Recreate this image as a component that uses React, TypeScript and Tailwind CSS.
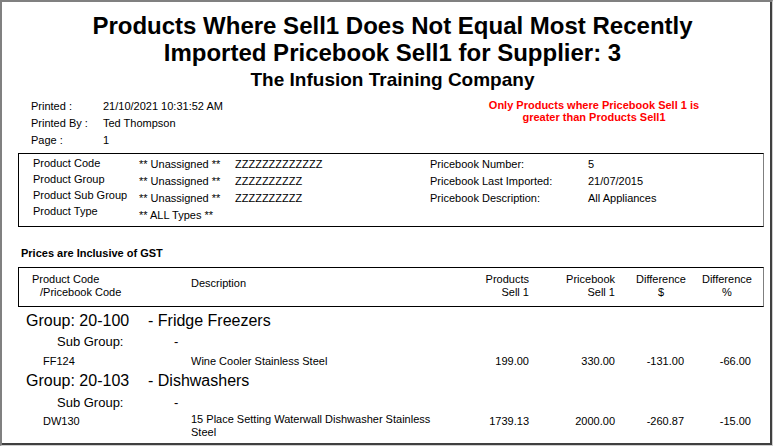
const filterRows = [
  { label: 'Product Code', value: '** Unassigned **', range: 'ZZZZZZZZZZZZZ' },
  { label: 'Product Group', value: '** Unassigned **', range: 'ZZZZZZZZZZ' },
  { label: 'Product Sub Group', value: '** Unassigned **', range: 'ZZZZZZZZZZ' },
  { label: 'Product Type', value: '** ALL Types **', range: '' },
];

const pricebookRows = [
  { label: 'Pricebook Number:', value: '5' },
  { label: 'Pricebook Last Imported:', value: '21/07/2015' },
  { label: 'Pricebook Description:', value: 'All Appliances' },
];

function NumberCells({ sell, book, diff, pct }: { sell: string; book: string; diff: string; pct: string }) {
  return (
    <>
      <div className="w-[88px] text-right">{sell}</div>
      <div className="w-[86px] text-right">{book}</div>
      <div className="w-[69px] text-right">{diff}</div>
      <div className="w-[67px] text-right">{pct}</div>
    </>
  );
}

export default function App() {
  return (
    <div className="w-[773px] h-[446px] bg-white border-t-2 border-l-2 border-[#808080] border-r border-b border-r-[#cfcfcf] border-b-[#cfcfcf] overflow-hidden font-['Liberation_Sans',Arial,sans-serif] text-black">
      <div className="h-full border-r-2 border-b-2 border-[#404040]">
        {/* Title */}
        <div className="pt-[10px] pl-[13px] text-center font-bold">
          <div className="text-[24px] leading-[27px]">Products Where Sell1 Does Not Equal Most Recently</div>
          <div className="text-[24px] leading-[27px]">Imported Pricebook Sell1 for Supplier: 3</div>
          <div className="mt-[2px] text-[19px] leading-[24px]">The Infusion Training Company</div>
        </div>

        {/* Printed info */}
        <div className="mt-[6px] flex text-[11px] leading-[17px]">
          <div className="ml-[29px] w-[72px]">
            <div>Printed :</div>
            <div>Printed By :</div>
            <div>Page :</div>
          </div>
          <div className="w-[361px]">
            <div>21/10/2021 10:31:52 AM</div>
            <div>Ted Thompson</div>
            <div>1</div>
          </div>
          <div className="w-[260px] mt-[1px] text-center font-bold text-[#ff0000] leading-[12px]">
            <div>Only Products where Pricebook Sell 1 is</div>
            <div>greater than Products Sell1</div>
          </div>
        </div>

        {/* Filter box */}
        <div className="mt-[4px] ml-[16px] w-[746px] h-[74px] border border-black border-r-[#7f7f7f] flex text-[11px] pl-[14px]">
          <div className="w-[106px] mt-[1px] leading-[16px]">
            {filterRows.map((r) => (
              <div key={r.label}>{r.label}</div>
            ))}
          </div>
          <div className="w-[96px] mt-[2px] leading-[17px]">
            {filterRows.map((r) => (
              <div key={r.label}>{r.value}</div>
            ))}
          </div>
          <div className="w-[195px] mt-[2px] leading-[17px]">
            {filterRows.map((r) => (
              <div key={r.label} className="h-[17px]">{r.range}</div>
            ))}
          </div>
          <div className="w-[158px] mt-[2px] leading-[17px]">
            {pricebookRows.map((r) => (
              <div key={r.label}>{r.label}</div>
            ))}
          </div>
          <div className="mt-[2px] leading-[17px]">
            {pricebookRows.map((r) => (
              <div key={r.label}>{r.value}</div>
            ))}
          </div>
        </div>

        <div className="mt-[20px] ml-[19px] text-[11px] leading-[13px] font-bold">Prices are Inclusive of GST</div>

        {/* Column header */}
        <div className="mt-[7px] ml-[16px] w-[746px] h-[40px] border border-black border-r-[#7f7f7f] flex text-[11px] leading-[13px] pt-[5px]">
          <div className="w-[172px]">
            <div className="pl-[13px]">Product Code</div>
            <div className="pl-[21px]">/Pricebook Code</div>
          </div>
          <div className="w-[250px] mt-[4px]">Description</div>
          <div className="w-[88px] text-right">
            <div>Products</div>
            <div>Sell 1</div>
          </div>
          <div className="w-[86px] text-right">
            <div>Pricebook</div>
            <div>Sell 1</div>
          </div>
          <div className="ml-[21px] flex flex-col items-center">
            <div>Difference</div>
            <div>$</div>
          </div>
          <div className="ml-[16px] flex flex-col items-center">
            <div>Difference</div>
            <div>%</div>
          </div>
        </div>

        {/* Rows */}
        <div className="ml-[16px]">
          <div className="mt-[4px] flex text-[16px] leading-[20px] pl-[8px]">
            <div className="w-[122px]">Group: 20-100</div>
            <div>- Fridge Freezers</div>
          </div>
          <div className="mt-[2px] flex text-[13px] leading-[18px] pl-[39px]">
            <div className="w-[117px]">Sub Group:</div>
            <div>-</div>
          </div>
          <div className="mt-[4px] flex text-[11px] leading-[13px]">
            <div className="w-[173px] pl-[25px]">FF124</div>
            <div className="w-[250px]">Wine Cooler Stainless Steel</div>
            <NumberCells sell="199.00" book="330.00" diff="-131.00" pct="-66.00" />
          </div>
          <div className="mt-[3px] flex text-[16px] leading-[20px] pl-[8px]">
            <div className="w-[122px]">Group: 20-103</div>
            <div>- Dishwashers</div>
          </div>
          <div className="mt-[3px] flex text-[13px] leading-[18px] pl-[39px]">
            <div className="w-[117px]">Sub Group:</div>
            <div>-</div>
          </div>
          <div className="mt-[1px] flex text-[11px] leading-[13px]">
            <div className="w-[173px] pl-[25px] pt-[2px]">DW130</div>
            <div className="w-[250px]">15 Place Setting Waterwall Dishwasher Stainless Steel</div>
            <div className="flex pt-[2px]">
              <NumberCells sell="1739.13" book="2000.00" diff="-260.87" pct="-15.00" />
            </div>
          </div>
        </div>
      </div>
    </div>
  );
}
